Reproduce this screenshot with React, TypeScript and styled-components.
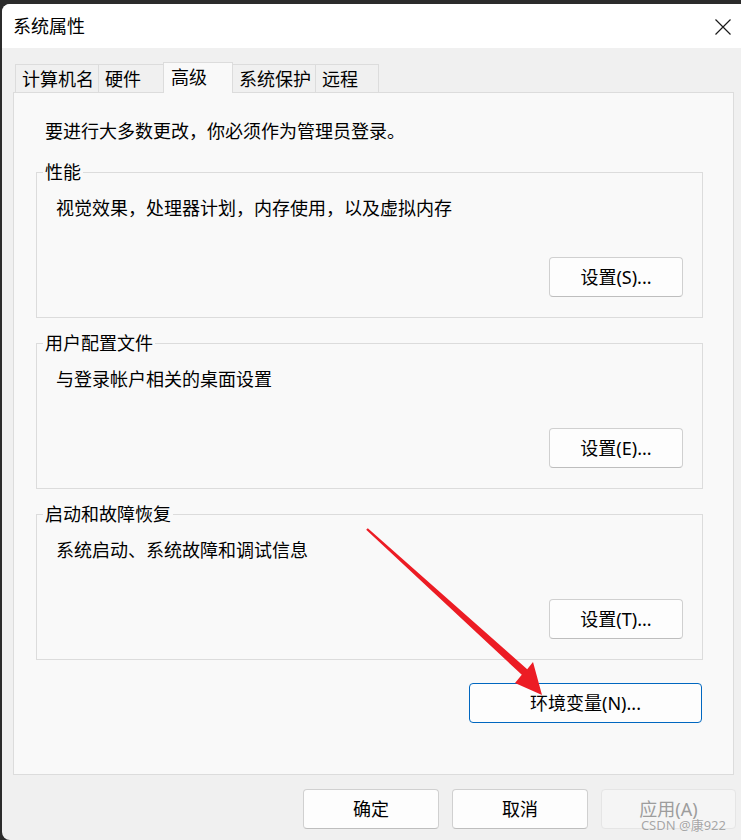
import React from "react";
import styled, { createGlobalStyle, css } from "styled-components";

const Global = createGlobalStyle`
  html, body { margin: 0; padding: 0; background: #2b2b2b; }
  body { font-family: "Noto Sans", "Noto Sans CJK SC", sans-serif; color: #000; }
  * { box-sizing: border-box; }
`;

const Stage = styled.div`
  position: relative;
  width: 741px;
  height: 840px;
  overflow: hidden;
  padding: 4px 0 0 2px;
  background: #2b2b2b;
`;

const Window = styled.div`
  width: 739px;
  height: 836px;
  border-radius: 8px 0 0 8px;
  overflow: hidden;
  background: #f0f0f0;
  display: flex;
  flex-direction: column;
`;

const TitleBar = styled.div`
  height: 44px;
  flex: none;
  background: #ffffff;
  display: flex;
  align-items: center;
  justify-content: space-between;
  padding: 0 10px 0 11px;
`;

const Title = styled.div`
  font-size: 18px;
  line-height: 20px;
`;

const CloseBtn = styled.div`
  width: 16px;
  height: 16px;
  display: flex;
  margin-top: 1px;
`;

const Body = styled.div`
  flex: 1;
  display: flex;
  flex-direction: column;
  padding: 14px 0 0 11px;
`;

const TabRow = styled.div`
  height: 30px;
  display: flex;
  align-items: flex-end;
  margin-left: 2px;
`;

const Tab = styled.div<{ $w: number; $active?: boolean }>`
  width: ${(p) => p.$w}px;
  height: 28px;
  margin-right: -1px;
  border: 1px solid #dcdcdc;
  border-bottom: none;
  background: #f0f0f0;
  padding-left: 6px;
  display: flex;
  align-items: center;
  font-size: 18px;
  line-height: 20px;
  position: relative;
  ${(p) =>
    p.$active &&
    css`
      height: 31px;
      margin-bottom: -1px;
      background: #f9f9f9;
      padding-left: 7px;
      padding-bottom: 2px;
      z-index: 2;
    `}
`;

const Panel = styled.div`
  width: 721px;
  height: 683px;
  border: 1px solid #dcdcdc;
  background: #f9f9f9;
  padding: 28px 30px 0 22px;
  display: flex;
  flex-direction: column;
`;

const Intro = styled.div`
  padding-left: 9px;
  font-size: 18px;
  line-height: 20px;
  margin-bottom: 21px;
`;

const GroupStack = styled.div`
  display: flex;
  flex-direction: column;
  gap: 15px;
`;

const Group = styled.fieldset`
  margin: 0;
  padding: 0;
  border: 1px solid #dcdcdc;
  min-width: 0;
`;

const Legend = styled.legend`
  margin-left: 6px;
  padding: 0 2px;
  font-size: 18px;
  line-height: 20px;
`;

const GroupBody = styled.div`
  display: flex;
  flex-direction: column;
  padding: 16px 19px 20px 19px;
`;

const Desc = styled.div`
  font-size: 18px;
  line-height: 20px;
  margin-bottom: 39px;
`;

const Button = styled.button<{ $w: number; $variant?: "accent" | "disabled" }>`
  width: ${(p) => p.$w}px;
  height: 40px;
  flex: none;
  border: 1px solid #d0d0d0;
  border-bottom-color: #bebebe;
  border-radius: 4px;
  background: #fdfdfd;
  font-family: "Noto Sans", "Noto Sans CJK SC", sans-serif;
  font-size: 18px;
  line-height: 20px;
  color: #000;
  padding: 0;
  display: flex;
  align-items: center;
  justify-content: center;
  ${(p) =>
    p.$variant === "accent" &&
    css`
      border-color: #0067c0;
    `}
  ${(p) =>
    p.$variant === "disabled" &&
    css`
      background: #f5f5f5;
      border-color: #e5e5e5;
      color: #9d9d9d;
    `}
`;

const GroupButton = styled(Button)`
  align-self: flex-end;
`;

const EnvButton = styled(Button)`
  align-self: flex-end;
  margin: 23px 1px 0 0;
`;

const Footer = styled.div`
  display: flex;
  justify-content: flex-end;
  gap: 13px;
  margin-top: 14px;
  padding-right: 5px;
`;

const Watermark = styled.div`
  position: absolute;
  right: 15px;
  bottom: 7px;
  font-family: "Noto Sans", "Noto Sans CJK SC", sans-serif;
  font-size: 13px;
  line-height: 15px;
  color: #a6a6a6;
  text-shadow: 0 0 1px #fff;
  pointer-events: none;
`;

const Annotation = styled.svg`
  position: absolute;
  left: 0;
  top: 0;
  pointer-events: none;
`;

const tabs = [
  { label: "计算机名", w: 84 },
  { label: "硬件", w: 66 },
  { label: "高级", w: 70, active: true },
  { label: "系统保护", w: 84 },
  { label: "远程", w: 64 },
];

const groups = [
  { title: "性能", desc: "视觉效果，处理器计划，内存使用，以及虚拟内存", btn: "设置(S)..." },
  { title: "用户配置文件", desc: "与登录帐户相关的桌面设置", btn: "设置(E)..." },
  { title: "启动和故障恢复", desc: "系统启动、系统故障和调试信息", btn: "设置(T)..." },
];

export default function App() {
  return (
    <>
      <Global />
      <Stage>
        <Window>
          <TitleBar>
            <Title>系统属性</Title>
            <CloseBtn>
              <svg width="16" height="16" viewBox="0 0 16 16">
                <path d="M0.5 0.5 L15.5 15.5 M15.5 0.5 L0.5 15.5" stroke="#1a1a1a" strokeWidth="1.2" fill="none" />
              </svg>
            </CloseBtn>
          </TitleBar>
          <Body>
            <TabRow>
              {tabs.map((t) => (
                <Tab key={t.label} $w={t.w} $active={t.active}>
                  {t.label}
                </Tab>
              ))}
            </TabRow>
            <Panel>
              <Intro>要进行大多数更改，你必须作为管理员登录。</Intro>
              <GroupStack>
                {groups.map((g) => (
                  <Group key={g.title}>
                    <Legend>{g.title}</Legend>
                    <GroupBody>
                      <Desc>{g.desc}</Desc>
                      <GroupButton type="button" $w={134}>
                        {g.btn}
                      </GroupButton>
                    </GroupBody>
                  </Group>
                ))}
              </GroupStack>
              <EnvButton type="button" $w={233} $variant="accent">
                环境变量(N)...
              </EnvButton>
            </Panel>
            <Footer>
              <Button type="button" $w={136}>确定</Button>
              <Button type="button" $w={136}>取消</Button>
              <Button type="button" $w={135} $variant="disabled">应用(A)</Button>
            </Footer>
          </Body>
        </Window>
        <Annotation width="741" height="840" viewBox="0 0 741 840">
          <polygon
            points="366.2,529.8 367.8,528.2 527.2,669.2 533,662 542,695 515,683 521.8,674.8"
            fill="#ec1c24"
          />
        </Annotation>
        <Watermark>CSDN @康922</Watermark>
      </Stage>
    </>
  );
}
